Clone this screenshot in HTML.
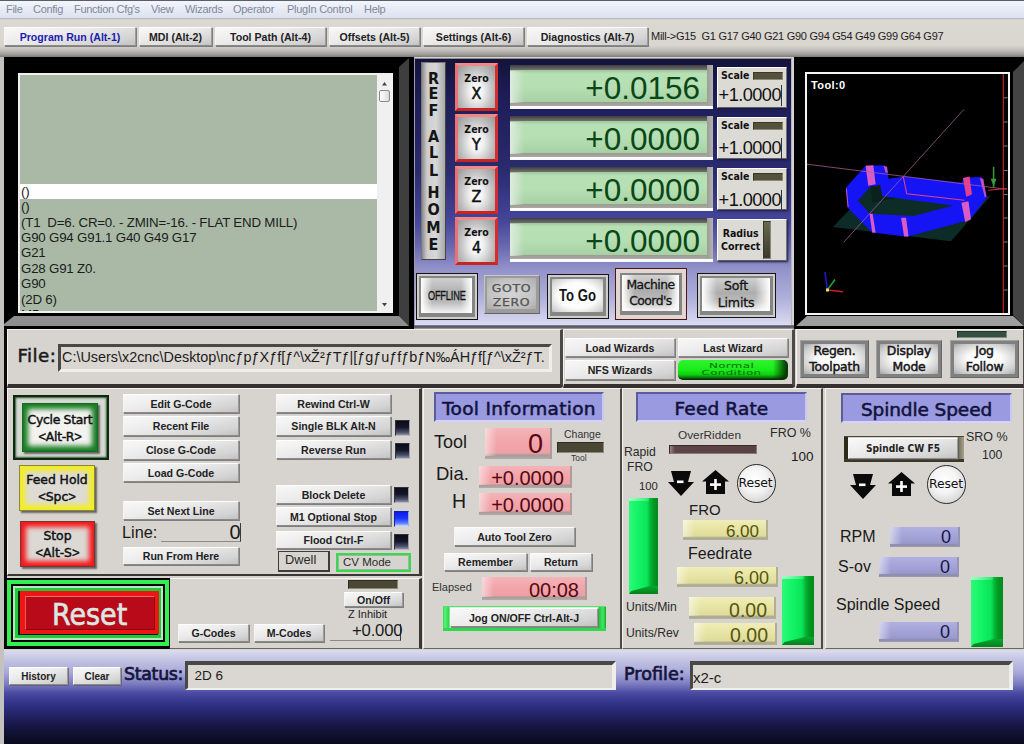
<!DOCTYPE html>
<html><head><meta charset="utf-8"><title>Mach3 CNC Controller</title>
<style>
*{box-sizing:border-box;margin:0;padding:0}
html,body{width:1024px;height:744px;overflow:hidden;background:#d6d3ce}
body{position:relative;font-family:"Liberation Sans",sans-serif;color:#111;font-size:12px}
.a{position:absolute}
.t{position:absolute;white-space:nowrap;line-height:1}
.tb{font-family:"DejaVu Sans Condensed","DejaVu Sans","Liberation Sans",sans-serif}
#menu{left:0;top:0;width:1024px;height:19px;background:linear-gradient(#f3f5fa,#e6eaf5 55%,#dde2f0);border-top:1px solid #55606a;border-bottom:1px solid #b4b7c0}
#menu span{position:absolute;top:1.5px;font-size:11px;color:#80889a;letter-spacing:-.3px}
.b{position:absolute;background:linear-gradient(168deg,#f8f8f8,#ebebeb 40%,#d3d3d3 82%,#c2c2c2);border:1px solid;border-color:#fdfdfd #9c9c9c #8a8a8a #f6f6f6;box-shadow:1px 1px 0 rgba(90,90,90,.7);font-weight:bold;font-size:10.6px;color:#222;white-space:nowrap;display:flex;align-items:center;justify-content:center}
.panel{position:absolute;background:#d7d4cf;border:1px solid;border-color:#f4f3ef #8e8c88 #8e8c88 #f4f3ef}
.led{position:absolute;background:linear-gradient(#0c0c18 0,#14162a 45%,#4a4f68 80%,#8a90a8 100%);border:1px solid;border-color:#30303c #a0a0a8 #b8b8c0 #30303c}
.oled{position:absolute;background:#4a4734;border:1px solid;border-color:#2e2c20 #8c8a7a #8c8a7a #2e2c20}
/* gcode */
#gc-green div.l{position:absolute;left:1px;font-size:13.3px;color:#1c1c1c;white-space:nowrap;line-height:15px;letter-spacing:-.2px}
/* dro */
#dro{left:414px;top:58px;width:378px;height:270px;background:linear-gradient(#13133a 0,#1c1c55 12%,#2b2b70 42%,#45459a 60%,#6a6ab0 70%,#9292ca 78%,#b0b0dc 89%,#e0e0f4 100%);border-top:1px solid #8c8c8c;border-left:1px solid #9a9ab0;border-right:1px solid #b4b4c4}
.zero{position:absolute;left:455px;width:43px;height:48px;border:3px solid;border-color:#f08888 #d82c2c #c82424 #ee7070;background:radial-gradient(ellipse at 50% 60%,#fff 0,#f2f2f2 25%,#c0c0c0 62%,#979797 100%);text-align:center;font-weight:bold;color:#111}
.zero i{display:block;font-style:normal;font-size:10.5px;line-height:12px;margin-top:6px}
.zero b{display:block;font-size:16px;line-height:17px;font-weight:normal;margin-top:1px;-webkit-text-stroke:.5px #111}
.dro{position:absolute;left:509.5px;width:203.5px;height:44px;background:linear-gradient(#3e3e40 0,#5a5a5a 6%,#70706e 11%,#a4c8a2 12.5%,#b7e1b5 20%,#b6dfb4 50%,#a9d3a7 80%,#a6cea4 84%,#9c9c94 85%,#a8a8a0 92.5%,#fff 93.5%,#f6f6ff 100%)}
.dro span{position:absolute;right:13px;top:7.5px;font-size:31.5px;line-height:31px;color:#0b4716}
.dro:before{content:"";position:absolute;left:0;top:5.5px;width:14px;height:32px;background:linear-gradient(90deg,rgba(225,235,225,.95),rgba(200,225,200,0))}
.dro:after{content:"";position:absolute;right:0;top:0;width:6px;height:41px;background:linear-gradient(90deg,#9c9c96,#b4b4ae)}
.scale{position:absolute;left:717px;width:70px;height:41px;background:#dcdad5;border:1px solid;border-color:#fff #77757a #5e5c64 #fff;box-shadow:1px 1px 2px #1a1a40}
.scale i{position:absolute;left:3px;top:1px;font-style:normal;font-weight:bold;font-size:10.5px}
.scale u{position:absolute;left:35px;top:4px;width:30px;height:8px;background:#55513a;border:1px solid;border-color:#3a3828 #8a887a #8a887a #3a3828}
.scale b{position:absolute;right:4px;top:17px;font-weight:normal;font-size:18.2px;line-height:21px;border-right:1px solid #333;letter-spacing:-.55px}
.ib{position:absolute;background:#8c8c8c;border:1px solid #222}
.ib>div{position:absolute;left:4px;top:3px;right:4px;bottom:4px;background:radial-gradient(ellipse at 50% 50%,#fff 0,#fbfbfb 45%,#c4c4c4 85%,#9c9c9c 100%);display:flex;align-items:center;justify-content:center;text-align:center;line-height:1.18;color:#1a1a1a}
.title{position:absolute;overflow:hidden;-webkit-text-stroke:.55px #12123c;font-family:"DejaVu Sans",sans-serif;background:#9a9ae0;border:2px solid;border-color:#5c5c9c #c8c8f4 #d4d4fa #5c5c9c;color:#12123c;text-align:center;white-space:nowrap}
.fld{position:absolute;text-align:right;white-space:nowrap;overflow:hidden}
.pink{background:linear-gradient(#f3b4b8 0,#f2a4aa 50%,#eea0a6 80%,#a89c98 88%,#b4aca8 100%);color:#560812;border-right:2px solid #b09c9a}
.pink:before,.yel:before,.lav:before{content:"";position:absolute;left:0;top:0;bottom:3px;width:12px;background:linear-gradient(90deg,rgba(255,255,255,.5),rgba(255,255,255,0))}
.yel{background:linear-gradient(#f0eeb8 0,#e6e3a2 50%,#dedb9c 80%,#a8a68c 90%,#b6b4a0 100%);color:#55550c;border-right:2px solid #b0ae94}
.lav{background:linear-gradient(#b0b0e0 0,#a2a2d6 50%,#9a9ace 80%,#8c8ca8 90%,#9c9cb4 100%);color:#15154a;border-right:2px solid #9494b4}
.gbar{position:absolute;background:linear-gradient(90deg,#2cfa78 0,#14f466 30%,#0ae458 62%,#04b634 74%,#029a24 84%,#018a1c 100%);overflow:hidden}
.gbar:after{content:"";position:absolute;left:0;right:0;bottom:0;height:8px;background:linear-gradient(#07a830,#04801c);clip-path:polygon(0 100%,100% 100%,100% 0,72% 0,8% 62%)}
.gbar:before{content:"";position:absolute;left:0;width:70%;top:0;height:3px;background:linear-gradient(90deg,rgba(190,255,215,.8),rgba(150,255,190,.25))}
.rst{position:absolute;width:39px;height:39px;border-radius:50%;border:1.6px solid #2a2a2a;background:radial-gradient(circle at 45% 40%,#fff 0,#f4f4f4 40%,#cfcfcf 85%,#bdbdbd 100%);font-family:"DejaVu Sans",sans-serif;font-size:12.4px;text-align:center;line-height:36px;color:#111;letter-spacing:-.1px;text-indent:-1px}
.inp{position:absolute;background:#dad7d2;border:3px solid;border-color:#4a4846 #efeeea #efeeea #4a4846}
</style></head><body>
<div id="menu" class="a"><span style="left:6px">File</span><span style="left:33px">Config</span><span style="left:74px">Function Cfg's</span><span style="left:151px">View</span><span style="left:185px">Wizards</span><span style="left:233px">Operator</span><span style="left:287px">PlugIn Control</span><span style="left:364px">Help</span></div>
<div class="a" style="left:0px;top:20px;width:1024px;height:37px;background:linear-gradient(#dbd8d2 0,#d9d6d0 68%,#c6c3be 80%,#a3a19d 92%,#7d7b78 100%)"></div>
<div class="b" style="left:4px;top:27px;width:132px;height:19px;color:#1c1cb0">Program Run (Alt-1)</div>
<div class="b" style="left:139px;top:27px;width:73px;height:19px;">MDI (Alt-2)</div>
<div class="b" style="left:215px;top:27px;width:111px;height:19px;">Tool Path (Alt-4)</div>
<div class="b" style="left:329px;top:27px;width:91px;height:19px;">Offsets (Alt-5)</div>
<div class="b" style="left:423px;top:27px;width:101px;height:19px;">Settings (Alt-6)</div>
<div class="b" style="left:527px;top:27px;width:121px;height:19px;">Diagnostics (Alt-7)</div>
<div class="t " style="left:651px;top:31px;font-size:11px;color:#222;letter-spacing:-.27px">Mill-&gt;G15&nbsp; G1 G17 G40 G21 G90 G94 G54 G49 G99 G64 G97</div>
<div class="a" style="left:0px;top:57px;width:4px;height:687px;background:#c4c2be"></div>
<div class="a" style="left:4px;top:57px;width:3px;height:592px;background:#0a0a0a"></div>
<div class="a" style="left:4px;top:57px;width:410px;height:272px;background:#000"></div>
<svg class="a" style="left:399px;top:57px" width="10" height="269"><polygon points="0,10 10,1 10,269 0,259" fill="#3e3e3e"/></svg>
<svg class="a" style="left:4px;top:312px" width="410" height="17"><polygon points="0,14 0,12 10,4 395,4 405,14" fill="#8e8e8e"/></svg>
<div class="a" style="left:17.5px;top:73px;width:375.5px;height:240px;background:#f0f0f0"></div>
<div id="gc-green" class="a" style="left:20px;top:75px;width:357px;height:236px;background:#a9b9a6;overflow:hidden"><div class="a" style="left:0;top:109px;width:357px;height:15px;background:#fff"></div><div class="l" style="top:109px">()</div><div class="l" style="top:124px">()</div><div class="l" style="top:140px">(T1&nbsp; D=6. CR=0. - ZMIN=-16. - FLAT END MILL)</div><div class="l" style="top:155px">G90 G94 G91.1 G40 G49 G17</div><div class="l" style="top:170px">G21</div><div class="l" style="top:186px">G28 G91 Z0.</div><div class="l" style="top:201px">G90</div><div class="l" style="top:217px">(2D 6)</div><div class="l" style="top:232px">M5</div></div>
<div class="a" style="left:379px;top:90px;width:11px;height:12px;background:linear-gradient(90deg,#fff,#dcdcdc);border:1px solid #8a8a8a;border-radius:2px"></div>
<svg class="a" style="left:382px;top:82px" width="6" height="4"><polygon points="0,3.5 2.5,0 5,3.5" fill="#444"/></svg>
<svg class="a" style="left:382px;top:303px" width="6" height="4"><polygon points="0,0 5,0 2.5,3.5" fill="#444"/></svg>
<div id="dro" class="a"></div>
<div class="a" style="left:414px;top:325px;width:380px;height:4px;background:linear-gradient(#8a8aa8,#55555f 40%,#6a6a6a 70%,#b4b2ae)"></div>
<div class="a" style="left:421px;top:62px;width:25px;height:198px;background:linear-gradient(90deg,#8a8a8a,#cdcdcd 22%,#d8d8d8 60%,#a8a8a8);border:1px solid;border-color:#777 #444 #444 #777"></div>
<div class="a tb" style="left:421px;top:69.5px;width:25px;height:18px;text-align:center;font-weight:bold;font-size:16px;line-height:18px;color:#151515">R</div>
<div class="a tb" style="left:421px;top:84.5px;width:25px;height:18px;text-align:center;font-weight:bold;font-size:16px;line-height:18px;color:#151515">E</div>
<div class="a tb" style="left:421px;top:102px;width:25px;height:18px;text-align:center;font-weight:bold;font-size:16px;line-height:18px;color:#151515">F</div>
<div class="a tb" style="left:421px;top:127.5px;width:25px;height:18px;text-align:center;font-weight:bold;font-size:16px;line-height:18px;color:#151515">A</div>
<div class="a tb" style="left:421px;top:144px;width:25px;height:18px;text-align:center;font-weight:bold;font-size:16px;line-height:18px;color:#151515">L</div>
<div class="a tb" style="left:421px;top:162px;width:25px;height:18px;text-align:center;font-weight:bold;font-size:16px;line-height:18px;color:#151515">L</div>
<div class="a tb" style="left:421px;top:184px;width:25px;height:18px;text-align:center;font-weight:bold;font-size:16px;line-height:18px;color:#151515">H</div>
<div class="a tb" style="left:421px;top:201px;width:25px;height:18px;text-align:center;font-weight:bold;font-size:16px;line-height:18px;color:#151515">O</div>
<div class="a tb" style="left:421px;top:219px;width:25px;height:18px;text-align:center;font-weight:bold;font-size:16px;line-height:18px;color:#151515">M</div>
<div class="a tb" style="left:421px;top:235.5px;width:25px;height:18px;text-align:center;font-weight:bold;font-size:16px;line-height:18px;color:#151515">E</div>
<div class="zero tb" style="top:63px"><i>Zero</i><b>X</b></div>
<div class="zero tb" style="top:114px"><i>Zero</i><b>Y</b></div>
<div class="zero tb" style="top:166px"><i>Zero</i><b>Z</b></div>
<div class="zero tb" style="top:217px"><i>Zero</i><b>4</b></div>
<div class="dro" style="top:65px"><span>+0.0156</span></div>
<div class="dro" style="top:116px"><span>+0.0000</span></div>
<div class="dro" style="top:167px"><span>+0.0000</span></div>
<div class="dro" style="top:218px"><span>+0.0000</span></div>
<div class="scale" style="top:67px;height:41px"><i class="tb">Scale</i><u></u><b style="top:17px">+1.0000</b></div>
<div class="scale" style="top:116.5px;height:42px"><i class="tb">Scale</i><u></u><b style="top:20.5px">+1.0000</b></div>
<div class="scale" style="top:168px;height:42px"><i class="tb">Scale</i><u></u><b style="top:21px">+1.0000</b></div>
<div class="scale" style="top:219px;height:42px"><i class="tb" style="left:3px;top:7px;line-height:13px;text-align:center;font-size:10.5px">Radius<br>Correct</i><u style="left:45px;top:1px;width:8px;height:38px;background:linear-gradient(#6a6850,#3c3a2a)"></u></div>
<div class="a" style="left:416px;top:273px;width:62px;height:47px;border:1px solid #141414;background:#cfcfc9;padding:2px"><div style="width:100%;height:100%;background:#858585;padding:2px 3px 4px 2px"><div style="width:100%;height:100%;background:linear-gradient(90deg,#fff 0,rgba(255,255,255,0) 22%,rgba(255,255,255,0) 78%,#fff 100%),linear-gradient(#d0d0d0 0,#adadad 45%,#bcbcbc 70%,#f4f4f4 100%);display:flex;align-items:center;justify-content:center;text-align:center;white-space:nowrap;color:#151515"><span style="display:inline-block;font-weight:normal;-webkit-text-stroke:.35px #151515;font-size:13.5px;transform:scaleX(.68);letter-spacing:-.2px">OFFLINE</span></div></div></div>
<div class="a" style="left:484px;top:275px;width:56px;height:39px;background:#9c9c9c;border:1px solid;border-color:#c8c8c8 #6e6e6e #626262 #c4c4c4;padding:2px 3px 4px 2px"><div style="width:100%;height:100%;background:radial-gradient(ellipse at 50% 50%,#d4d4d4 0,#c4c4c4 60%,#ababab 100%);text-align:center;color:#545454;font-family:'DejaVu Sans',sans-serif;font-size:9.8px;line-height:13.6px;padding-top:4px;letter-spacing:.5px;-webkit-text-stroke:.25px #545454"><span style="display:inline-block;transform:scaleX(1.27)">GOTO<br>ZERO</span></div></div>
<div class="a" style="left:547px;top:274px;width:62px;height:45px;border:1px solid #141414;background:#cfcfc9;padding:2px"><div style="width:100%;height:100%;background:#858585;padding:2px 3px 4px 2px"><div style="width:100%;height:100%;background:radial-gradient(ellipse at 50% 50%,#fff 0,#fcfcfc 55%,#d0d0d0 90%,#b0b0b0 100%);display:flex;align-items:center;justify-content:center;text-align:center;white-space:nowrap;color:#151515"><span style="display:inline-block;font-weight:bold;font-size:16px;transform:scaleX(.82)">To Go</span></div></div></div>
<div class="a" style="left:615px;top:268px;width:72px;height:52px;border:1px solid #4a1616;background:#e2d6d2;padding:4px"><div style="width:100%;height:100%;background:#858585;padding:2px 3px 4px 2px"><div style="width:100%;height:100%;background:linear-gradient(90deg,#fff 0,rgba(255,255,255,0) 22%,rgba(255,255,255,0) 78%,#fff 100%),linear-gradient(#d0d0d0 0,#adadad 45%,#bcbcbc 70%,#f4f4f4 100%);display:flex;align-items:center;justify-content:center;text-align:center;white-space:nowrap;color:#151515"><span style="font-family:'DejaVu Sans',sans-serif;font-size:12.4px;line-height:16.5px;letter-spacing:-.55px;-webkit-text-stroke:.3px #151515">Machine<br>Coord's</span></div></div></div>
<div class="a" style="left:697px;top:273px;width:79px;height:45px;border:1px solid #141414;background:#cfcfc9;padding:2px"><div style="width:100%;height:100%;background:#858585;padding:2px 3px 4px 2px"><div style="width:100%;height:100%;background:linear-gradient(90deg,#fff 0,rgba(255,255,255,0) 22%,rgba(255,255,255,0) 78%,#fff 100%),linear-gradient(#d0d0d0 0,#adadad 45%,#bcbcbc 70%,#f4f4f4 100%);display:flex;align-items:center;justify-content:center;text-align:center;white-space:nowrap;color:#151515"><span style="font-family:'DejaVu Sans',sans-serif;font-size:12.6px;line-height:16.5px;letter-spacing:-.2px;-webkit-text-stroke:.3px #151515">Soft<br>Limits</span></div></div></div>
<div class="a" style="left:794px;top:57px;width:230px;height:272px;background:#000"></div>
<svg class="a" style="left:1013px;top:57px" width="11" height="269"><polygon points="0,15 11,4 11,269 0,258" fill="#444"/></svg>
<svg class="a" style="left:794px;top:312px" width="230" height="17"><polygon points="2,14 13,4 219,4 230,14" fill="#9e9e9e"/></svg>
<div class="a" style="left:805px;top:72px;width:205px;height:243px;border:2px solid #f4f4f4"></div>
<svg class="a" style="left:807px;top:74px" width="202" height="239" viewBox="807 74 202 239">
<line x1="1003.3" y1="74" x2="1003.3" y2="313" stroke="#b82828" stroke-width="1.2"/>
<g stroke="#6aa06a" stroke-width=".9"><line x1="1004" y1="73.5" x2="1007.5" y2="73.5"/><line x1="1004" y1="97.8" x2="1007.5" y2="97.8"/><line x1="1004" y1="122" x2="1007.5" y2="122"/><line x1="1004" y1="146" x2="1007.5" y2="146"/><line x1="1004" y1="170.5" x2="1007.5" y2="170.5"/><line x1="1004" y1="194.5" x2="1007.5" y2="194.5"/><line x1="1004" y1="218" x2="1007.5" y2="218"/><line x1="1004" y1="242" x2="1007.5" y2="242"/><line x1="1004" y1="266" x2="1007.5" y2="266"/><line x1="1004" y1="290" x2="1007.5" y2="290"/></g>
<svg x="800" y="100" width="224" height="160" viewBox="0 0 1024 731" overflow="visible">
<polygon points="150,580 300,425 870,440 690,645" fill="#0d2b27"/>
<polygon points="300,300 385,298 400,330 405,360 480,350 740,378 748,355 830,352 855,445 775,548 490,625 330,605 218,492 210,400" fill="#1414f4"/>
<polygon points="265,460 322,395 366,390 376,440 700,482 520,530 320,520" fill="#0d2b27"/>
<polygon points="322,395 366,390 376,440 440,448 330,470" fill="#0a211e"/>
<polygon points="300,300 335,298 346,385 312,392" fill="#d85cc4"/>
<polygon points="318,520 332,520 346,607 330,605" fill="#d85cc4"/>
<polygon points="462,538 485,538 496,624 476,624" fill="#d85cc4"/>
<polygon points="745,356 775,350 786,432 760,442" fill="#e6408a"/>
<polygon points="738,470 770,463 782,545 755,557" fill="#d85cc4"/>
<polygon points="382,300 398,305 402,335 390,330" fill="#c050c0"/>
<polygon points="822,356 838,360 852,440 845,445" fill="#c050c0"/>
<polyline points="212,405 220,490" stroke="#c050c0" stroke-width="5" fill="none"/>
<polyline points="472,350 488,428 752,458" stroke="#e0408c" stroke-width="5" fill="none"/>
<line x1="30" y1="293" x2="945" y2="408" stroke="#b0609a" stroke-width="3.4"/>
<line x1="200" y1="650" x2="750" y2="42" stroke="#a862a0" stroke-width="3.4"/>
<line x1="860" y1="412" x2="945" y2="404" stroke="#e02828" stroke-width="5"/>
<line x1="885" y1="305" x2="885" y2="400" stroke="#3a9a3a" stroke-width="7"/>
<polygon points="872,360 898,360 885,395" fill="#3a9a3a"/>
</svg>
<line x1="827.3" y1="290" x2="825" y2="272" stroke="#1818d0" stroke-width="1.6"/>
<line x1="827.3" y1="290" x2="835" y2="279.5" stroke="#20a030" stroke-width="1.6"/>
<line x1="827.3" y1="290" x2="843" y2="291.8" stroke="#d02020" stroke-width="1.6"/>
<rect x="826" y="288.5" width="3" height="3" fill="#f0e060"/>
</svg>
<div class="t " style="left:811px;top:79.5px;font-size:11px;color:#fff;font-weight:bold;letter-spacing:.4px">Tool:0</div>
<div class="panel" style="left:7px;top:329px;width:556px;height:59px;border-color:#f4f3ef #4c4a46 #343230 #f4f3ef;border-bottom-width:4px;border-right-width:3px;border-radius:0 0 3px 0"></div>
<div class="t " style="left:17.5px;top:346.5px;font-size:18.3px;color:#1a1a1a;-webkit-text-stroke:.5px #1a1a1a;font-family:'DejaVu Sans',sans-serif;letter-spacing:.4px">File:</div>
<div class="inp" style="left:58px;top:344px;width:494px;height:28px"></div>
<div class="t " style="left:62px;top:350px;font-size:14.4px;color:#1c1c1c">C:\Users\x2cnc\Desktop\nc&#402;p&#402;X&#402;f[&#402;^\x&#381;&#178;&#402;T&#402;|[&#402;g&#402;u&#402;f&#402;b&#402;N&#8240;&#193;H&#402;f[&#402;^\x&#381;&#178;&#402;T.</div>
<div class="panel" style="left:563px;top:329px;width:232px;height:59px;border-color:#f4f3ef #4c4a46 #343230 #f4f3ef;border-bottom-width:4px;border-right-width:3px;border-radius:0 0 3px 0"></div>
<div class="b" style="left:565px;top:338px;width:110px;height:19px;">Load Wizards</div>
<div class="b" style="left:565px;top:360px;width:110px;height:20px;">NFS Wizards</div>
<div class="b" style="left:678px;top:338px;width:110px;height:19px;">Last Wizard</div>
<div class="a" style="left:678px;top:360px;width:110px;height:20px;border-radius:5px;background:linear-gradient(90deg,rgba(0,40,0,0) 0,rgba(0,40,0,0) 88%,rgba(0,36,0,.8) 99%),linear-gradient(#30f430 0,#18ea18 55%,#10cc10 78%,#0a7a0a 92%,#053c05 100%);border-right:2px solid #0a3a0a;border-bottom:1px solid #063006;overflow:hidden"><div class="t" style="left:0;width:107px;top:3px;text-align:center;font-family:'DejaVu Sans',sans-serif;font-size:7px;line-height:7.3px;color:#0a6a0a;transform:scaleX(1.7);letter-spacing:.2px;white-space:normal">Normal<br>Condition</div></div>
<div class="panel" style="left:796px;top:329px;width:228px;height:59px;border-color:#f4f3ef #4c4a46 #343230 #f4f3ef;border-bottom-width:4px"></div>
<div class="a" style="left:957px;top:331px;width:50px;height:7px;background:#355042;border:1px solid;border-color:#22362c #7c8c82 #7c8c82 #22362c"></div>
<div class="a" style="left:800px;top:340px;width:69px;height:38px;background:#808080;border:1px solid;border-color:#a0a0a0 #666 #666 #a0a0a0"><div class="a" style="font-family:'DejaVu Sans',sans-serif;letter-spacing:-.2px;left:3px;top:3px;right:3px;bottom:3px;background:radial-gradient(ellipse at 50% 50%,#fff 0,#fafafa 40%,#c8c8c8 82%,#a4a4a4 100%);display:flex;align-items:center;justify-content:center;text-align:center;font-size:12.4px;line-height:16px;color:#161616;-webkit-text-stroke:.5px #161616">Regen.<br>Toolpath</div></div>
<div class="a" style="left:876px;top:340px;width:66px;height:38px;background:#808080;border:1px solid;border-color:#a0a0a0 #666 #666 #a0a0a0"><div class="a" style="font-family:'DejaVu Sans',sans-serif;letter-spacing:-.2px;left:3px;top:3px;right:3px;bottom:3px;background:radial-gradient(ellipse at 50% 50%,#fff 0,#fafafa 40%,#c8c8c8 82%,#a4a4a4 100%);display:flex;align-items:center;justify-content:center;text-align:center;font-size:12.4px;line-height:16px;color:#161616;-webkit-text-stroke:.5px #161616">Display<br>Mode</div></div>
<div class="a" style="left:950px;top:340px;width:69px;height:38px;background:#808080;border:1px solid;border-color:#a0a0a0 #666 #666 #a0a0a0"><div class="a" style="font-family:'DejaVu Sans',sans-serif;letter-spacing:-.2px;left:3px;top:3px;right:3px;bottom:3px;background:radial-gradient(ellipse at 50% 50%,#fff 0,#fafafa 40%,#c8c8c8 82%,#a4a4a4 100%);display:flex;align-items:center;justify-content:center;text-align:center;font-size:12.4px;line-height:16px;color:#161616;-webkit-text-stroke:.5px #161616">Jog<br>Follow</div></div>
<div class="panel" style="left:7px;top:388px;width:415px;height:188px;border-color:#f4f3ef #3a3836 #3a3834 #f4f3ef;border-bottom-width:2px;border-right-width:3px"></div>
<div class="a" style="left:13px;top:395px;width:96px;height:65px;background:#d5d9d1;border:2.5px solid #0d2a10;box-shadow:inset 0 0 2px 1px #2a5a30"></div>
<div class="a" style="left:23px;top:404px;width:74px;height:47px;background:#f2f2ee;box-shadow:inset 0 0 5px 5px #1b7e26,inset 0 0 0 1px #176a20,0 0 0 1px #176a20,2px 2px 1.5px 1px rgba(70,70,70,.75);text-align:center;font-family:'DejaVu Sans',sans-serif;font-size:12.4px;line-height:17px;padding-top:6.5px;color:#111;-webkit-text-stroke:.45px #111;white-space:nowrap;letter-spacing:-0.3px">Cycle Start<br><span style="font-family:'Liberation Sans',sans-serif;font-size:13px">&lt;</span>Alt-R<span style="font-family:'Liberation Sans',sans-serif;font-size:13px">&gt;</span></div>
<div class="a" style="left:20px;top:466px;width:74px;height:44px;background:#dddbd3;box-shadow:inset 0 0 5px 5px #f4ee22,inset 0 0 0 1px #8a8840,0 0 0 1px #8a8840,2px 2px 1.5px 1px rgba(70,70,70,.75);text-align:center;font-family:'DejaVu Sans',sans-serif;font-size:12.4px;line-height:17px;padding-top:4.5px;color:#111;-webkit-text-stroke:.45px #111;white-space:nowrap;letter-spacing:-0.05px">Feed Hold<br><span style="font-family:'Liberation Sans',sans-serif;font-size:13px">&lt;</span>Spc<span style="font-family:'Liberation Sans',sans-serif;font-size:13px">&gt;</span></div>
<div class="a" style="left:21px;top:522px;width:73px;height:44px;background:#dcd8d4;box-shadow:inset 0 0 5px 5px #f21c1c,inset 0 0 0 1px #7a3434,0 0 0 1px #7a3434,2px 2px 1.5px 1px rgba(70,70,70,.75);text-align:center;font-family:'DejaVu Sans',sans-serif;font-size:12.4px;line-height:17px;padding-top:4.5px;color:#111;-webkit-text-stroke:.45px #111;white-space:nowrap;letter-spacing:-0.05px">Stop<br><span style="font-family:'Liberation Sans',sans-serif;font-size:13px">&lt;</span>Alt-S<span style="font-family:'Liberation Sans',sans-serif;font-size:13px">&gt;</span></div>
<div class="b" style="left:123px;top:394px;width:116px;height:19px;">Edit G-Code</div>
<div class="b" style="left:123px;top:416px;width:116px;height:20px;">Recent File</div>
<div class="b" style="left:123px;top:440px;width:116px;height:20px;">Close G-Code</div>
<div class="b" style="left:123px;top:463px;width:116px;height:19px;">Load G-Code</div>
<div class="b" style="left:123px;top:501px;width:116px;height:19px;">Set Next Line</div>
<div class="b" style="left:123px;top:547px;width:116px;height:18px;">Run From Here</div>
<div class="t " style="left:122px;top:524px;font-size:16.3px;color:#1a1a1a">Line:</div>
<div class="a" style="left:161px;top:523px;width:80px;height:19px;border-bottom:1px solid #8c8a86;border-right:1px solid #3a3a3a"></div>
<div class="t " style="left:229.5px;top:522px;font-size:20px;color:#1a1a1a">0</div>
<div class="b" style="left:276px;top:394px;width:115px;height:19px;">Rewind Ctrl-W</div>
<div class="b" style="left:276px;top:416px;width:115px;height:20px;">Single BLK Alt-N</div>
<div class="b" style="left:276px;top:440px;width:115px;height:19px;">Reverse Run</div>
<div class="b" style="left:276px;top:485px;width:115px;height:19px;">Block Delete</div>
<div class="b" style="left:276px;top:507px;width:115px;height:19px;">M1 Optional Stop</div>
<div class="b" style="left:276px;top:531px;width:115px;height:18px;">Flood Ctrl-F</div>
<div class="led" style="left:395px;top:420px;width:15px;height:16px"></div>
<div class="led" style="left:395px;top:443px;width:15px;height:16px"></div>
<div class="led" style="left:394px;top:487px;width:15px;height:16px"></div>
<div class="led" style="left:394px;top:534px;width:15px;height:16px"></div>
<div class="led" style="left:394px;top:511px;width:15px;height:16px;background:linear-gradient(#0c1ce8 0,#1a34ff 45%,#5a80ff 80%,#c8d8ff 100%);border-color:#1020a0 #a0b0e0 #d0d8f0 #1020a0"></div>
<div class="a" style="left:278px;top:551px;width:52px;height:21px;border:1px solid #3c3c3c;border-right-width:2px;border-bottom-width:2px"></div>
<div class="t " style="left:285px;top:554px;font-size:12.8px;color:#2a2a2a">Dwell</div>
<div class="a" style="left:336px;top:553px;width:75px;height:19px;border:2px solid #38d850;box-shadow:inset 0 0 0 1px #9ab89a"></div>
<div class="t " style="left:343px;top:557px;font-size:11.5px;color:#2a2a2a">CV Mode</div>
<div class="panel" style="left:7px;top:578px;width:415px;height:71px;border-color:#f4f3ef #3a3836 #6a6864 #f4f3ef;border-right-width:3px"></div>
<div class="a" style="left:4px;top:578px;width:166px;height:71px;background:#050505"></div>
<div class="a" style="left:7px;top:580px;width:162px;height:66px;border:4px solid #34ee54;background:#050505;box-shadow:inset 0 0 0 2px #050505,inset 0 0 0 4px #b8e8c0,inset 0 0 0 7px #22c83c,inset 0 0 0 9px #062006"></div>
<div class="a" style="left:20px;top:591px;width:139px;height:43px;background:#f01414"></div>
<div class="a" style="left:25px;top:596px;width:130px;height:34px;background:#b80a18;border:1px solid;border-color:#e87070 #8c0410 #7c040c #e06060"></div>
<div class="t tb" style="left:52px;top:600px;font-size:30px;color:#dbe7e3;letter-spacing:0;-webkit-text-stroke:.6px #dbe7e3">Reset</div>
<div class="b" style="left:178px;top:624px;width:71px;height:18px;">G-Codes</div>
<div class="b" style="left:254px;top:624px;width:70px;height:18px;">M-Codes</div>
<div class="oled" style="left:348px;top:580px;width:50px;height:9px"></div>
<div class="b" style="left:344px;top:592px;width:59px;height:15px;">On/Off</div>
<div class="t " style="left:348px;top:609px;font-size:11px;color:#222">Z Inhibit</div>
<div class="a" style="left:330px;top:624px;width:71px;height:17px;border-bottom:1px solid #8c8a86;border-right:1px solid #3a3a3a"></div>
<div class="t " style="left:352px;top:623px;font-size:16.7px;color:#1a1a1a;letter-spacing:-.2px">+0.000</div>
<div class="panel" style="left:422.5px;top:388px;width:199px;height:261px;border-color:#f4f3ef #4a4844 #6a6864 #f4f3ef;border-right-width:2px"></div>
<div class="title" style="left:434px;top:392px;width:170px;height:30px;font-size:18.5px;line-height:29px;letter-spacing:.3px">Tool Information</div>
<div class="t " style="left:434px;top:433px;font-size:18px;color:#1a1a1a">Tool</div>
<div class="fld pink" style="left:485px;top:428px;width:67px;height:31px;font-size:27px;line-height:33px;padding-right:7px">0</div>
<div class="t " style="left:564px;top:429px;font-size:10.5px;color:#333">Change</div>
<div class="oled" style="left:557px;top:442px;width:47px;height:11px"></div>
<div class="t " style="left:571px;top:454px;font-size:8.5px;color:#333">Tool</div>
<div class="t " style="left:436px;top:465px;font-size:18.5px;color:#1a1a1a">Dia.</div>
<div class="fld pink" style="left:479px;top:466px;width:93px;height:22px;font-size:20px;line-height:24px;padding-right:6px">+0.0000</div>
<div class="t " style="left:452px;top:492px;font-size:19.5px;color:#1a1a1a">H</div>
<div class="fld pink" style="left:479px;top:493px;width:93px;height:22px;font-size:20px;line-height:24px;padding-right:6px">+0.0000</div>
<div class="b" style="left:454px;top:527px;width:121px;height:19px;">Auto Tool Zero</div>
<div class="b" style="left:444px;top:553px;width:83px;height:18px;">Remember</div>
<div class="b" style="left:530px;top:553px;width:62px;height:18px;">Return</div>
<div class="t " style="left:432px;top:582px;font-size:11px;color:#333">Elapsed</div>
<div class="fld pink" style="left:482px;top:577px;width:105px;height:23px;font-size:20px;line-height:26px;padding-right:6px">00:08</div>
<div class="a" style="left:443px;top:606px;width:163px;height:25px;background:linear-gradient(90deg,#2ee04a 0,#5af27a 2px,#28d844 6px,#d8f0d8 7px,#d8f0d8 155px,#1cc83c 156px,#44e864 160px,#14a82c 163px);border-top:1px solid #58e070;border-bottom:3px solid #30d850"></div>
<div class="b" style="left:450px;top:608px;width:148px;height:19px;">Jog ON/OFF Ctrl-Alt-J</div>
<div class="panel" style="left:622px;top:388px;width:201px;height:261px;border-color:#f4f3ef #4a4844 #6a6864 #f4f3ef;border-right-width:2px"></div>
<div class="title" style="left:636px;top:392px;width:171px;height:30px;font-size:18.5px;line-height:29px;letter-spacing:.15px">Feed Rate</div>
<div class="t " style="left:678px;top:430px;font-size:11.8px;color:#333">OverRidden</div>
<div class="a" style="left:669px;top:445px;width:88px;height:9px;background:linear-gradient(90deg,#9a8484 0,#5e4646 5px,#5a4242 100%);border:1px solid;border-color:#3a2a2a #8a7a7a #8a7a7a #3a2a2a"></div>
<div class="t " style="left:770px;top:427px;font-size:12.5px;color:#2a2a2a">FRO %</div>
<div class="t " style="left:791px;top:450px;font-size:13.5px;color:#1a1a1a">100</div>
<div class="t " style="left:624px;top:446px;font-size:12.2px;color:#2a2a2a">Rapid</div>
<div class="t " style="left:627px;top:461px;font-size:12.2px;color:#2a2a2a">FRO</div>
<div class="t " style="left:639px;top:481px;font-size:11.3px;color:#2a2a2a">100</div>
<svg class="a" style="left:667.5px;top:471px" width="26" height="26" viewBox="0 0 26 26"><polygon points="3,0 23,0 20,11 26,11 13,25 0,11 6,11" fill="#0a0a0a"/><rect x="9" y="9.5" width="6.5" height="2.6" fill="#fff"/></svg>
<svg class="a" style="left:702px;top:470px" width="27" height="25" viewBox="0 0 27 25"><polygon points="13.5,0 27,11.5 23,11.5 23,24 4,24 4,11.5 0,11.5" fill="#0a0a0a"/><rect x="8" y="13.3" width="11" height="2.6" fill="#fff"/><rect x="12.2" y="9" width="2.6" height="11" fill="#fff"/></svg>
<div class="rst" style="left:736.5px;top:464px">Reset</div>
<div class="gbar" style="left:629px;top:498px;width:29px;height:96px"></div>
<div class="t " style="left:689px;top:502px;font-size:15px;color:#1a1a1a">FRO</div>
<div class="fld yel" style="left:683px;top:520px;width:85px;height:20px;font-size:17px;line-height:23px;padding-right:7px">6.00</div>
<div class="t " style="left:688px;top:546px;font-size:16px;color:#1a1a1a">Feedrate</div>
<div class="fld yel" style="left:677px;top:567px;width:101px;height:20px;font-size:18px;line-height:23px;padding-right:7px">6.00</div>
<div class="t " style="left:626px;top:601px;font-size:12.2px;color:#2a2a2a">Units/Min</div>
<div class="fld yel" style="left:689px;top:597px;width:87px;height:22px;font-size:19.5px;line-height:27px;padding-right:7px">0.00</div>
<div class="t " style="left:626px;top:627px;font-size:12.2px;color:#2a2a2a">Units/Rev</div>
<div class="fld yel" style="left:694px;top:623px;width:83px;height:22px;font-size:19.5px;line-height:25px;padding-right:7px">0.00</div>
<div class="gbar" style="left:782px;top:576px;width:32px;height:69px"></div>
<div class="panel" style="left:825px;top:388px;width:199px;height:261px;border-color:#f4f3ef #8e8c88 #6a6864 #f4f3ef"></div>
<div class="title" style="left:841px;top:393px;width:171px;height:30px;font-size:18.5px;line-height:29px;letter-spacing:-.1px">Spindle Speed</div>
<div class="a" style="left:844px;top:436px;width:120px;height:26px;background:linear-gradient(90deg,#2c2a18 0,#2c2a18 4px,#d0d0d0 4px,#d0d0d0 113px,#6c6a54 114px,#a8a48c 120px);border-top:1px solid #4a4836;border-bottom:3px solid #3a3826"></div>
<div class="b" style="left:848px;top:438px;width:110px;height:21px;font-size:10.1px;font-family:'DejaVu Sans Condensed','DejaVu Sans',sans-serif">Spindle CW F5</div>
<div class="t " style="left:966px;top:431px;font-size:12.5px;color:#2a2a2a">SRO %</div>
<div class="t " style="left:982px;top:449px;font-size:12.2px;color:#2a2a2a">100</div>
<svg class="a" style="left:850px;top:473.5px" width="26" height="26" viewBox="0 0 26 26"><polygon points="3,0 23,0 20,11 26,11 13,25 0,11 6,11" fill="#0a0a0a"/><rect x="9" y="9.5" width="6.5" height="2.6" fill="#fff"/></svg>
<svg class="a" style="left:888px;top:472px" width="27" height="25" viewBox="0 0 27 25"><polygon points="13.5,0 27,11.5 23,11.5 23,24 4,24 4,11.5 0,11.5" fill="#0a0a0a"/><rect x="8" y="13.3" width="11" height="2.6" fill="#fff"/><rect x="12.2" y="9" width="2.6" height="11" fill="#fff"/></svg>
<div class="rst" style="left:927px;top:465px">Reset</div>
<div class="t " style="left:840px;top:529px;font-size:16px;color:#1a1a1a">RPM</div>
<div class="fld lav" style="left:890px;top:527px;width:70px;height:20px;font-size:18px;line-height:21px;padding-right:7px">0</div>
<div class="t " style="left:838px;top:559px;font-size:16px;color:#1a1a1a">S-ov</div>
<div class="fld lav" style="left:879px;top:557px;width:80px;height:20px;font-size:18px;line-height:21px;padding-right:7px">0</div>
<div class="t " style="left:836px;top:597px;font-size:16px;color:#1a1a1a">Spindle Speed</div>
<div class="fld lav" style="left:879px;top:622px;width:80px;height:20px;font-size:18px;line-height:21px;padding-right:7px">0</div>
<div class="gbar" style="left:971px;top:577px;width:32px;height:70px"></div>
<div class="a" style="left:4px;top:650px;width:1020px;height:94px;background:linear-gradient(#dcdcee 0,#c4c4e4 10%,#a8a8d8 24%,#7c7cc0 36%,#4a4aa2 46%,#34348a 56%,#24246a 68%,#151540 82%,#0a0a1e 100%)"></div>
<div class="b" style="left:9px;top:667px;width:59px;height:18px;font-size:10px">History</div>
<div class="b" style="left:73px;top:667px;width:48px;height:18px;font-size:10px">Clear</div>
<div class="t " style="left:124px;top:666px;font-size:17.4px;color:#14143c;font-family:'DejaVu Sans',sans-serif;-webkit-text-stroke:.7px #14143c;letter-spacing:-.3px">Status:</div>
<div class="inp" style="left:185px;top:661px;width:431px;height:29px;border-width:4px 4px 2px 3px"></div>
<div class="t " style="left:194.5px;top:668.5px;font-size:13.5px;color:#1c1c1c">2D 6</div>
<div class="t " style="left:624px;top:666px;font-size:17.6px;color:#14143c;font-family:'DejaVu Sans',sans-serif;-webkit-text-stroke:.7px #14143c">Profile:</div>
<div class="inp" style="left:690px;top:661px;width:323px;height:29px;border-width:4px 4px 2px 3px"></div>
<div class="t " style="left:693px;top:670px;font-size:15px;color:#1c1c1c">x2-c</div>
</body></html>
